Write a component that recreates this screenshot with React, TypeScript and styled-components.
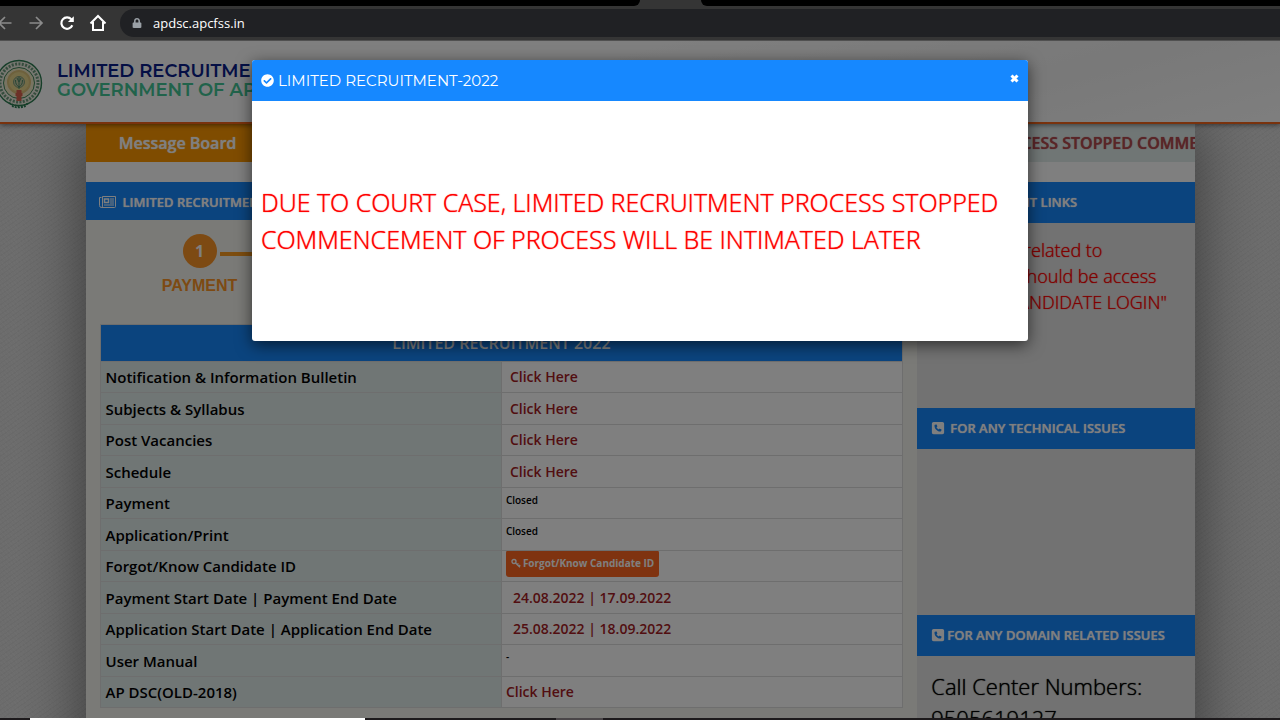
import React from 'react';
import styled, { createGlobalStyle } from 'styled-components';
import { FaCheckCircle, FaLock } from 'react-icons/fa';
import { FaSquarePhone } from 'react-icons/fa6';

const Global = createGlobalStyle`
  *, *::before, *::after { box-sizing: border-box; }
  body { margin: 0; font-family: "Open Sans", "Noto Sans", sans-serif; color: #000; }
  h1, h2, h3, p { margin: 0; }
  a { color: inherit; text-decoration: none; }
`;

const Screen = styled.div`
  height: 100vh;
  display: flex;
  flex-direction: column;
  overflow: hidden;
  position: relative;
`;

const TabStrip = styled.div`
  height: 6px;
  flex: none;
  display: grid;
  grid-template-columns: 50% 61px 1fr;
  background: #353535;
`;

const TabEdge = styled.span<{ $side: 'left' | 'right' }>`
  background: #000;
  border-radius: ${p => (p.$side === 'left' ? '0 0 6px 0' : '0 0 0 6px')};
`;

const Toolbar = styled.nav`
  height: 35px;
  flex: none;
  display: flex;
  align-items: center;
  background: #353535;
  border-bottom: 1px solid #505050;
  overflow: hidden;
`;

const NavButton = styled.button<{ $dim?: boolean }>`
  width: 31px;
  height: 28px;
  flex: none;
  padding: 0;
  border: 0;
  background: none;
  color: ${p => (p.$dim ? '#8b8b8b' : '#fff')};
  display: grid;
  place-items: center;
`;

const NavGroup = styled.div`
  display: flex;
  flex: none;
  margin-left: -11px;
  width: 131px;
`;

const AddressBar = styled.label`
  flex: 1;
  height: 28px;
  display: flex;
  align-items: center;
  gap: 11px;
  padding-left: 12px;
  border-radius: 14px 0 0 14px;
  background: #202124;
  color: #9aa0a6;
  font-size: 10px;
`;

const AddressInput = styled.input`
  flex: 1;
  padding: 0;
  border: 0;
  outline: 0;
  background: none;
  color: #fff;
  font: 13px "Open Sans", "Noto Sans", sans-serif;
`;

const Page = styled.div`
  flex: 1;
  min-height: 0;
  overflow: hidden;
  position: relative;
  background:
    repeating-linear-gradient(50deg, rgba(255, 255, 255, 0.08) 0 1px, transparent 1px 3px),
    repeating-linear-gradient(-35deg, rgba(0, 0, 0, 0.03) 0 1px, transparent 1px 4px),
    #dadada;
`;

const Backdrop = styled.div`
  position: absolute;
  inset: 0;
  background: rgba(0, 0, 0, 0.5);
`;

const Header = styled.header`
  height: 83px;
  display: flex;
  align-items: center;
  gap: 14px;
  padding-bottom: 2px;
  background: linear-gradient(165deg, #fff 40%, #f2f2f2 75%, #fdfdfd);
  border-bottom: 2px solid #f2641a;
  position: relative;
  box-shadow: 0 1px 5px rgba(0, 0, 0, 0.5);
`;

const Brand = styled.h1`
  font: 600 18px/19px Montserrat, Inter, sans-serif;
  color: #0b1f8a;
  white-space: nowrap;
`;

const BrandSub = styled.span`
  display: block;
  color: #43c696;
`;

const Container = styled.main`
  width: calc(100% - 171px);
  margin: 0 auto;
  min-height: 100%;
  background: #fff;
  box-shadow: 0 0 60px rgba(0, 0, 0, 0.5);
`;

const MessageBar = styled.div`
  display: flex;
  height: 38px;
  margin-bottom: 20px;
  background: #e0eceb;
  font-size: 16px;
  font-weight: 600;
  line-height: 38px;
  overflow: hidden;
`;

const MessageLabel = styled.div`
  width: 184px;
  flex: none;
  text-align: center;
  background: #ff9900;
  color: #fff;
  text-shadow: 0 0 1px currentColor;
`;

const Marquee = styled.div`
  flex: 1;
  min-width: 0;
  overflow: hidden;
  white-space: nowrap;
  padding-left: 370px;
  color: #b24a4f;
  text-shadow: 0 0 1px currentColor;
`;

const Columns = styled.div`
  display: grid;
  grid-template-columns: 3fr 1fr;
`;

const MainPanel = styled.section`
  background: #f5f5ee;
  min-height: 560px;
`;

const SidePanel = styled.aside`
  background: #e4e4e4;
`;

const PanelTitle = styled.h2<{ $tall?: boolean; $gap: number }>`
  height: ${p => (p.$tall ? 41 : 38)}px;
  display: flex;
  align-items: center;
  gap: ${p => p.$gap}px;
  padding: ${p => (p.$tall ? '0 14px 1px' : '2px 13px 0')};
  background: #1688fd;
  color: #fff;
  font-size: 13px;
  font-weight: 600;
  text-shadow: 0 0 1px currentColor;
  white-space: nowrap;
  svg { flex: none; }
`;

const SideBody = styled.div<{ $height: number }>`
  min-height: ${p => p.$height}px;
  padding: 14px;
  font-weight: 300;
  text-shadow: 0 0 1px currentColor;
`;

const LoginNote = styled.p`
  color: #f00;
  font-size: 18px;
  line-height: 26px;
`;

const CallCenter = styled.p`
  font-size: 22px;
  line-height: 32px;
`;

const Steps = styled.ol`
  height: 104px;
  margin: 0;
  padding: 14px 57px 0;
  list-style: none;
  display: flex;
`;

const Step = styled.li`
  width: 114px;
  display: flex;
  flex-direction: column;
  align-items: center;
  gap: 8px;
  color: #fb9427;
  font: 700 16px/20px "Liberation Sans", Arial, sans-serif;
`;

const StepNumber = styled.span`
  width: 34px;
  height: 34px;
  border-radius: 50%;
  background: #fb9427;
  color: #fff;
  font: 700 16px/34px "Open Sans", sans-serif;
  text-align: center;
`;

const StepLine = styled.li`
  flex: 1;
  height: 4px;
  margin: 18px 0 0 -37px;
  background: #fb9a1e;
`;

const DataTable = styled.table`
  width: calc(100% - 28px);
  margin: 0 14px;
  border-collapse: collapse;
  table-layout: fixed;
  background: #fff;
  border: 1px solid #ddd;
  tbody tr { height: 31px; }
  tbody tr:nth-child(even) { height: 32px; }
`;

const TableHead = styled.th`
  height: 37px;
  padding: 0;
  background: #1688fd;
  color: #fff;
  font-size: 16px;
  font-weight: 600;
`;

const RowLabel = styled.th`
  padding: 0 5px;
  border: 1px solid #ddd;
  background: #e0eceb;
  font-size: 15px;
  font-weight: 600;
  line-height: 20px;
  text-align: left;
  white-space: nowrap;
`;

const Cell = styled.td<{ $indent?: number; $small?: boolean }>`
  padding: 0 0 0 ${p => 4 + (p.$indent || 0)}px;
  border: 1px solid #ddd;
  color: ${p => (p.$small ? '#000' : '#a51c24')};
  font-size: ${p => (p.$small ? 10 : 14)}px;
  line-height: ${p => (p.$small ? 16 : 20)}px;
  font-weight: 600;
  vertical-align: ${p => (p.$small ? 'top' : 'middle')};
  white-space: nowrap;
  ${p => p.$small && 'padding-top: 4px;'}
`;

const ForgotButton = styled.button`
  display: flex;
  align-items: center;
  gap: 2px;
  height: 27px;
  margin: -6px 0 0;
  padding: 0 5px;
  border: 0;
  border-radius: 3px;
  background: #ff6720;
  color: #fff;
  font: 700 10px "Open Sans", sans-serif;
`;

const Modal = styled.div`
  position: absolute;
  top: 60px;
  left: 50%;
  transform: translateX(-50%);
  width: calc(100% - 504px);
  min-height: 281px;
  background: #fff;
  border-radius: 3px;
  overflow: hidden;
  box-shadow: 0 4px 16px rgba(0, 0, 0, 0.6);
`;

const ModalHeader = styled.div`
  height: 41px;
  display: flex;
  align-items: center;
  justify-content: space-between;
  padding: 0 9px;
  background: #1688ff;
  color: #fff;
`;

const ModalTitle = styled.h2`
  display: flex;
  align-items: center;
  gap: 4px;
  font: 400 15px Montserrat, Inter, sans-serif;
`;

const CloseButton = styled.button`
  padding: 0 0 5px;
  border: 0;
  background: none;
  color: #fff;
  line-height: 0;
`;

const ModalText = styled.p`
  padding: 83px 9px 0;
  color: #f00;
  font-size: 25px;
  font-weight: 300;
  text-shadow: 0 0 1px currentColor;
  line-height: 37px;
`;

const Taskbar = styled.div`
  height: 2px;
  flex: none;
  display: grid;
  grid-template-columns: 30px 335px 191px 47px 1fr;
  background: #1d1a1c;
`;

const TaskItem = styled.span<{ $color?: string }>`
  background: ${p => p.$color || 'transparent'};
`;

const SealDrawing = styled.svg`
  flex: none;
  margin-top: 7px;
`;

const Seal = () => (
  <SealDrawing width="43" height="50" viewBox="0 0 43 50" fill="none" aria-hidden="true">
    <circle cx="19" cy="24" r="22.5" fill="#efeee2" stroke="#2c7c52" strokeWidth="1.4" />
    <circle cx="19" cy="24" r="19" stroke="#6c9b7c" strokeWidth="3" strokeDasharray="2 1.4" />
    <circle cx="19" cy="24" r="15.5" fill="#f0e9c4" stroke="#3c845a" strokeWidth="1" />
    <circle cx="19" cy="23" r="11" fill="#e9d68c" stroke="#dcc27a" strokeWidth="2" />
    <circle cx="19" cy="23" r="5.500" fill="#c5c8a0" stroke="#7d9c78" strokeWidth="1" />
    <path d="M19 18v12M15.500 21c0 4 1 5 3.500 7 2.500-2 3.500-3 3.500-7M17 19l2 4 2-4" stroke="#4e8a68" />
    <path d="M16.500 31h5v3h1v3h-1v5h-5v-5h-1v-3h1z" fill="#d9634e" />
    <path d="M9 44c3 1 5 3 10 3s7-2 10-3M12 47c4 2 10 2 14 0" stroke="#2c7c52" strokeWidth="1.6" strokeDasharray="2 1" />
  </SealDrawing>
);

const ArrowIcon = ({ flip }: { flip?: boolean }) => (
  <svg width="16" height="16" viewBox="0 0 16 16" fill="none" stroke="currentColor" strokeWidth="1.7" aria-hidden="true">
    <path d={flip ? 'M1.500 8h12M8 2l6 6-6 6' : 'M14.500 8h-12M8 2L2 8l6 6'} />
  </svg>
);

const ReloadIcon = () => (
  <svg width="16" height="16" viewBox="0 0 16 16" fill="none" stroke="currentColor" strokeWidth="2.200" aria-hidden="true">
    <path d="M13.300 10.300A5.700 5.700 0 1 1 12.400 4.400" />
    <path d="M14.800 1.200v5.900H8.900z" fill="currentColor" stroke="none" />
  </svg>
);

const HomeIcon = () => (
  <svg width="18" height="18" viewBox="0 0 18 18" fill="none" stroke="currentColor" strokeWidth="2" aria-hidden="true">
    <path d="M1.500 9.500L9 2l7.500 7.500M4 8v8h10V8" />
  </svg>
);

const CloseIcon = () => (
  <svg width="9" height="9" viewBox="0 0 9 9" stroke="currentColor" strokeWidth="3" aria-hidden="true">
    <path d="M1.500 1.500l6 6M7.500 1.500l-6 6" />
  </svg>
);

const NewsIcon = () => (
  <svg width="17" height="12" viewBox="0 0 17 12" fill="none" stroke="currentColor" aria-hidden="true">
    <path d="M3.500.5h13v10a1 1 0 0 1-1 1h-13a2 2 0 0 1-2-2v-8h2M3.500.5v9.500a1.500 1.500 0 0 1-1 1.500" />
    <path d="M5.500 3h4v3.500h-4z" strokeWidth="1.500" />
    <path d="M11 3h4M11 5h4M11 7h4M5 9h10" />
  </svg>
);

const KeyIcon = () => (
  <svg width="10" height="10" viewBox="0 0 10 10" fill="none" stroke="currentColor" strokeWidth="1.400" aria-hidden="true">
    <circle cx="3" cy="3.500" r="2" />
    <path d="M4.500 5l4.500 4.300M6.200 6.700l1.300-1.300M7.900 8.200l1.300-1.300" />
  </svg>
);

type RowData = { label: string; value: string; kind: 'link' | 'date' | 'small' | 'button'; indent?: number };

const rows: RowData[] = [
  { label: 'Notification & Information Bulletin', value: 'Click Here', kind: 'link', indent: 4 },
  { label: 'Subjects & Syllabus', value: 'Click Here', kind: 'link', indent: 4 },
  { label: 'Post Vacancies', value: 'Click Here', kind: 'link', indent: 4 },
  { label: 'Schedule', value: 'Click Here', kind: 'link', indent: 4 },
  { label: 'Payment', value: 'Closed', kind: 'small' },
  { label: 'Application/Print', value: 'Closed', kind: 'small' },
  { label: 'Forgot/Know Candidate ID', value: 'Forgot/Know Candidate ID', kind: 'button' },
  { label: 'Payment Start Date | Payment End Date', value: '24.08.2022 | 17.09.2022', kind: 'date', indent: 7 },
  { label: 'Application Start Date | Application End Date', value: '25.08.2022 | 18.09.2022', kind: 'date', indent: 7 },
  { label: 'User Manual', value: '-', kind: 'small' },
  { label: 'AP DSC(OLD-2018)', value: 'Click Here', kind: 'link' },
];

const RowValue = ({ row }: { row: RowData }) => {
  if (row.kind === 'link') return <a href="#">{row.value}</a>;
  if (row.kind === 'button') return <ForgotButton type="button"><KeyIcon />{row.value}</ForgotButton>;
  return <>{row.value}</>;
};

export default function App() {
  return (
    <Screen>
      <Global />
      <TabStrip>
        <TabEdge $side="left" />
        <span />
        <TabEdge $side="right" />
      </TabStrip>
      <Toolbar>
        <NavGroup>
          <NavButton $dim aria-label="Back"><ArrowIcon /></NavButton>
          <NavButton $dim aria-label="Forward"><ArrowIcon flip /></NavButton>
          <NavButton aria-label="Reload"><ReloadIcon /></NavButton>
          <NavButton aria-label="Home"><HomeIcon /></NavButton>
        </NavGroup>
        <AddressBar>
          <FaLock />
          <AddressInput aria-label="Address" defaultValue="apdsc.apcfss.in" />
        </AddressBar>
      </Toolbar>
      <Page>
        <Header>
          <Seal />
          <Brand>
            LIMITED RECRUITMENT
            <BrandSub>GOVERNMENT OF AP</BrandSub>
          </Brand>
        </Header>
        <Container>
          <MessageBar>
            <MessageLabel>Message Board</MessageLabel>
            <Marquee>DUE TO COURT CASE, LIMITED RECRUITMENT PROCESS STOPPED COMMENCEMENT OF PROCESS</Marquee>
          </MessageBar>
          <Columns>
            <MainPanel>
              <PanelTitle $gap={7}><NewsIcon />LIMITED RECRUITMENT</PanelTitle>
              <Steps>
                <Step><StepNumber>1</StepNumber>PAYMENT</Step>
                <StepLine />
              </Steps>
              <DataTable>
                <thead>
                  <tr><TableHead colSpan={2}>LIMITED RECRUITMENT 2022</TableHead></tr>
                </thead>
                <tbody>
                  {rows.map(row => (
                    <tr key={row.label}>
                      <RowLabel scope="row">{row.label}</RowLabel>
                      <Cell $indent={row.indent} $small={row.kind === 'small'}>
                        <RowValue row={row} />
                      </Cell>
                    </tr>
                  ))}
                </tbody>
              </DataTable>
            </MainPanel>
            <SidePanel>
              <PanelTitle $tall $gap={16}><FaSquarePhone size={14} />IMPORTANT LINKS</PanelTitle>
              <SideBody $height={185}>
                <LoginNote>All services related to<br />Candidate should be access<br />through "CANDIDATE LOGIN"</LoginNote>
              </SideBody>
              <PanelTitle $tall $gap={5}><FaSquarePhone size={14} />FOR ANY TECHNICAL ISSUES</PanelTitle>
              <SideBody $height={166} />
              <PanelTitle $tall $gap={2}><FaSquarePhone size={14} />FOR ANY DOMAIN RELATED ISSUES</PanelTitle>
              <SideBody $height={100}>
                <CallCenter>Call Center Numbers:<br />9505619127</CallCenter>
              </SideBody>
            </SidePanel>
          </Columns>
        </Container>
        <Backdrop />
      </Page>
      <Taskbar>
        <TaskItem />
        <TaskItem $color="#fff" />
        <TaskItem />
        <TaskItem $color="#4a4648" />
        <TaskItem />
      </Taskbar>
      <Modal role="dialog" aria-labelledby="notice-title">
        <ModalHeader>
          <ModalTitle id="notice-title"><FaCheckCircle size={13} />LIMITED RECRUITMENT-2022</ModalTitle>
          <CloseButton type="button" aria-label="Close"><CloseIcon /></CloseButton>
        </ModalHeader>
        <ModalText>DUE TO COURT CASE, LIMITED RECRUITMENT PROCESS STOPPED COMMENCEMENT OF PROCESS WILL BE INTIMATED LATER</ModalText>
      </Modal>
    </Screen>
  );
}
